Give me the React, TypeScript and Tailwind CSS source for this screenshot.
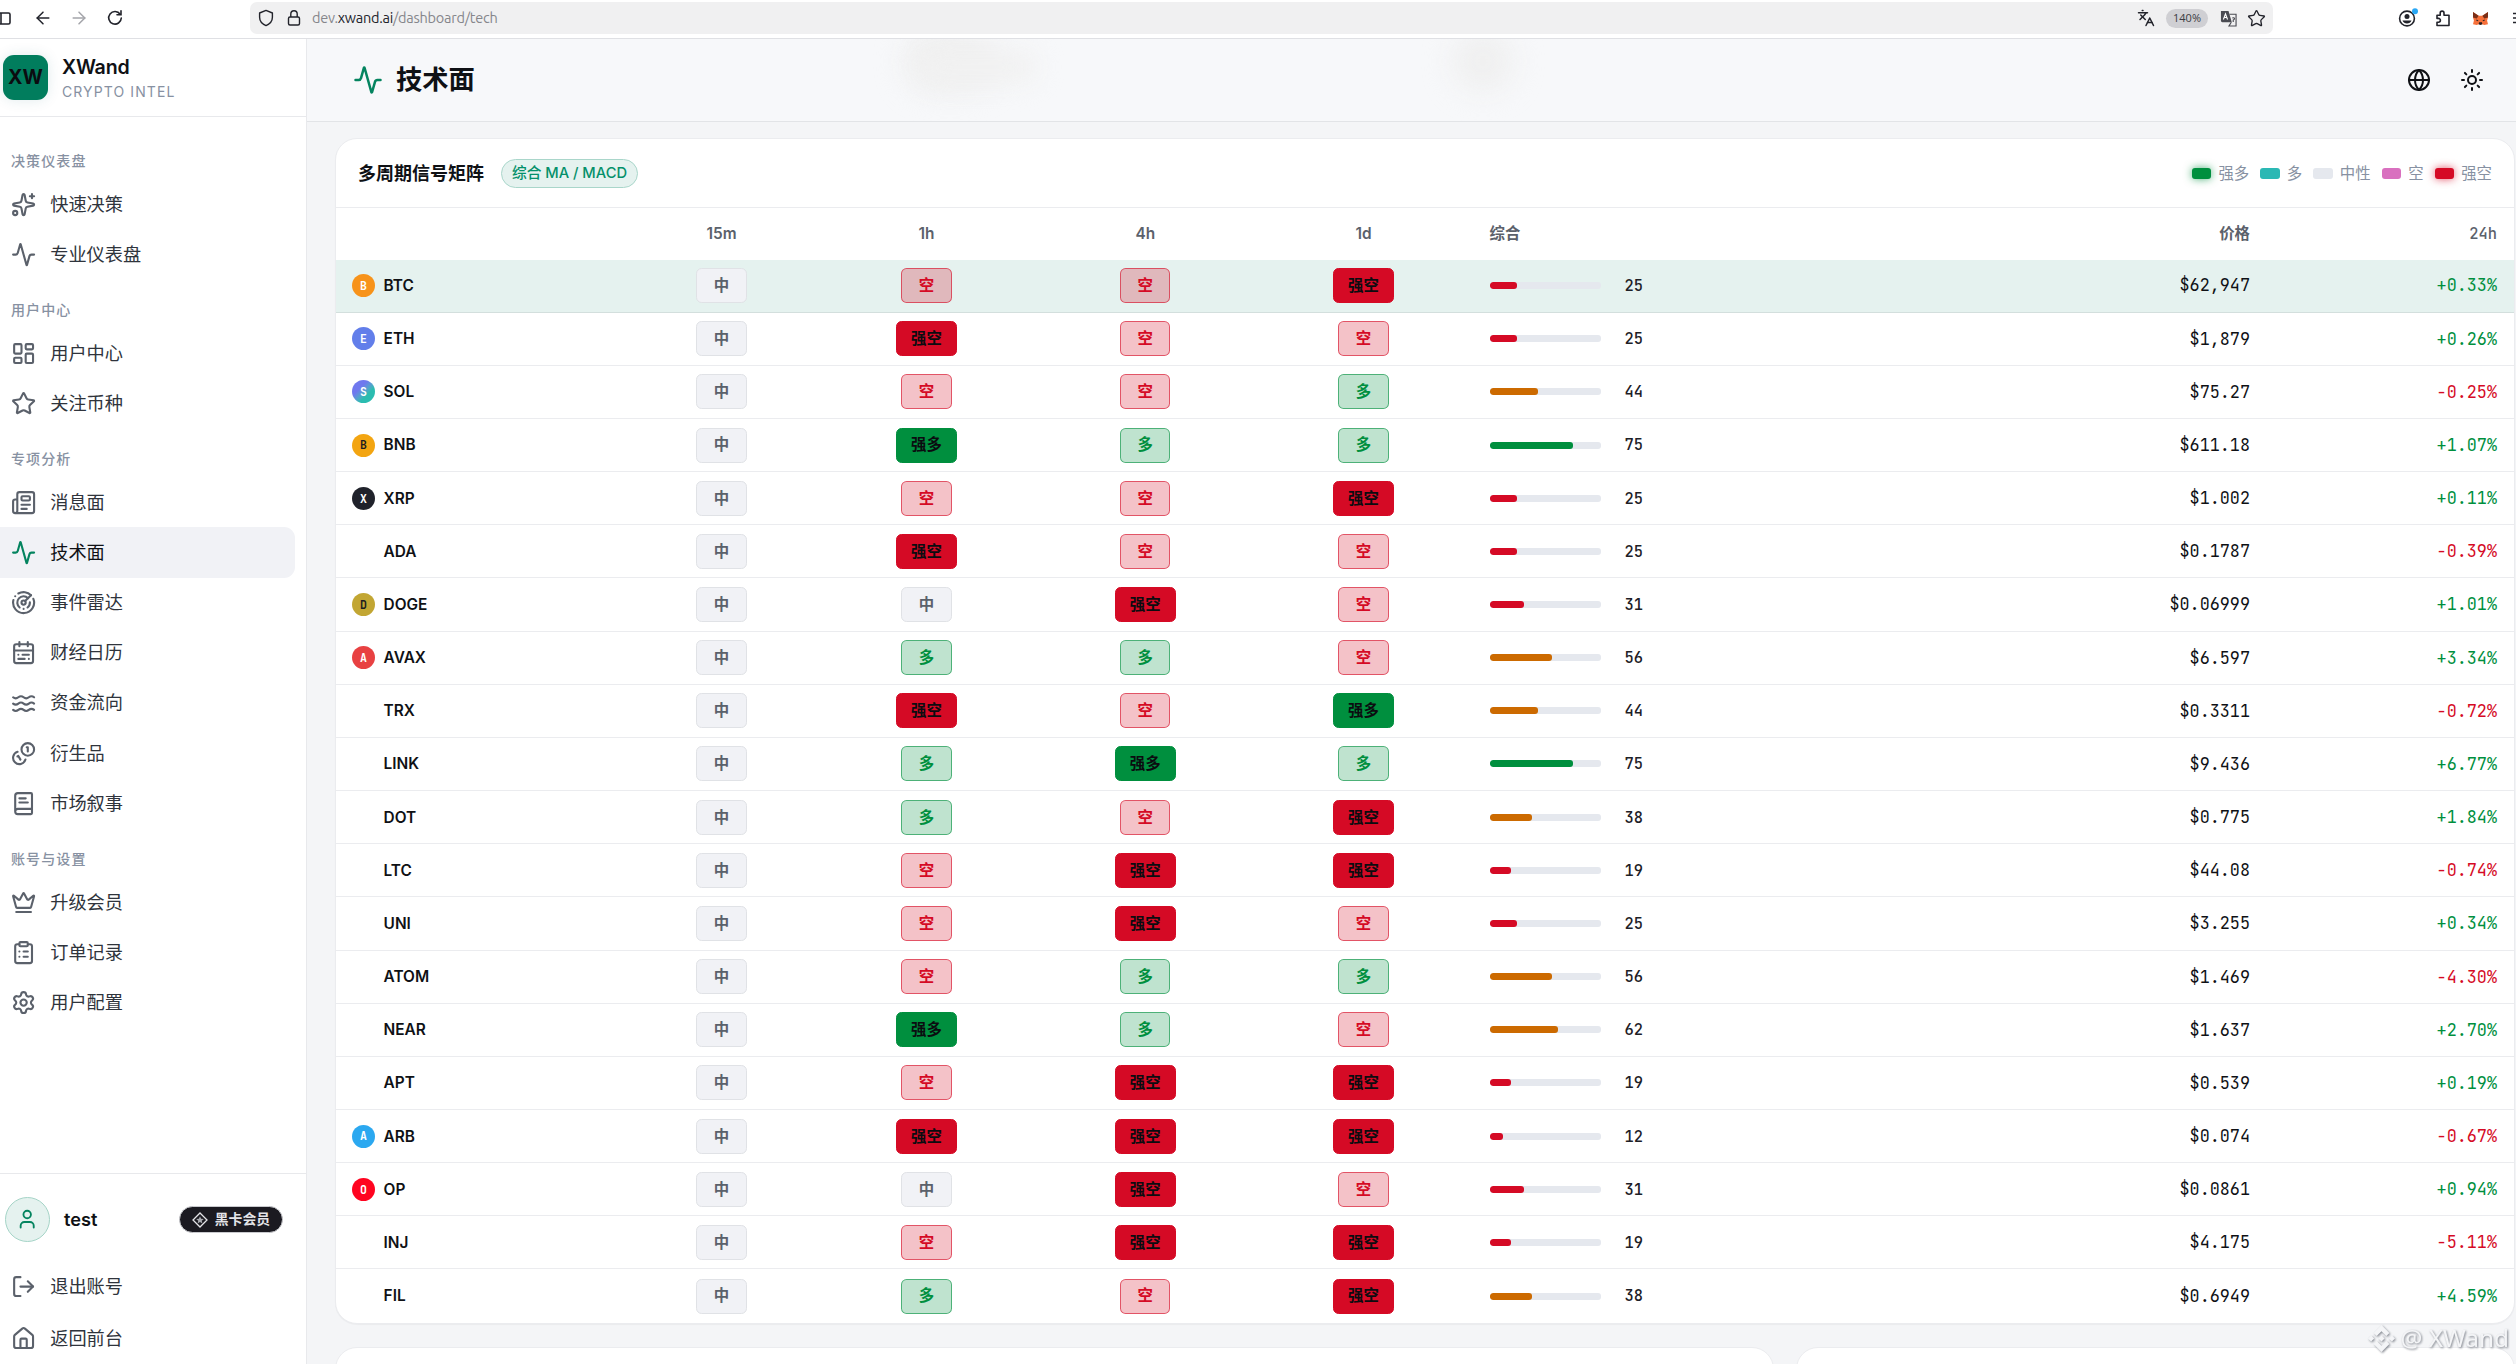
import {
  Activity,
  ArrowLeft,
  ArrowRight,
  BookText,
  CalendarRange,
  ClipboardList,
  Crown,
  Globe,
  House,
  Languages,
  LayoutDashboard,
  LogOut,
  Newspaper,
  Radar,
  Settings,
  Sparkles,
  Star,
  Sun,
  User,
  Waves,
} from "lucide-react";

const DerivativesIcon = ({ className }: { className?: string }) => (
  <svg
    viewBox="0 0 24 24"
    fill="none"
    stroke="currentColor"
    strokeWidth="2"
    strokeLinecap="round"
    strokeLinejoin="round"
    className={className}
  >
    <path d="M13.744 17.736a6 6 0 1 1-7.48-7.48" />
    <path d="M15 6h1v4" />
    <path d="m6.134 14.768.866-.5 2 3.464" />
    <circle cx="16" cy="8" r="6" />
  </svg>
);

const navGroups = [
  {
    title: "决策仪表盘",
    items: [
      { label: "快速决策", icon: Sparkles },
      { label: "专业仪表盘", icon: Activity },
    ],
  },
  {
    title: "用户中心",
    items: [
      { label: "用户中心", icon: LayoutDashboard },
      { label: "关注币种", icon: Star },
    ],
  },
  {
    title: "专项分析",
    items: [
      { label: "消息面", icon: Newspaper },
      { label: "技术面", icon: Activity, active: true },
      { label: "事件雷达", icon: Radar },
      { label: "财经日历", icon: CalendarRange },
      { label: "资金流向", icon: Waves },
      { label: "衍生品", icon: DerivativesIcon },
      { label: "市场叙事", icon: BookText },
    ],
  },
  {
    title: "账号与设置",
    items: [
      { label: "升级会员", icon: Crown },
      { label: "订单记录", icon: ClipboardList },
      { label: "用户配置", icon: Settings },
    ],
  },
];

type Signal = "中" | "多" | "空" | "强多" | "强空";

const signalStyles: Record<Signal, string> = {
  中: "min-w-[50.4px] border-[#e0e2e6] bg-[#f1f2f6] text-[#5b616b]",
  多: "min-w-[50.4px] border-[#008f3e]/60 bg-[#008f3e]/25 text-[#008f3e]",
  空: "min-w-[50.4px] border-[#d50a25]/60 bg-[#d50a25]/25 text-[#d50a25]",
  强多: "border-[#008f3e] bg-[#008f3e] text-[#0b0c10]",
  强空: "border-[#d50a25] bg-[#d50a25] text-[#0b0c10]",
};

const coinStyles: Record<string, string> = {
  BTC: "bg-[#f7931a] text-white",
  ETH: "bg-[#627eea] text-white",
  SOL: "bg-linear-135 from-[#6f78ee] from-35% to-[#2bbcb0] to-65% text-white",
  BNB: "bg-[#f3a511] text-[#1c1c20]",
  XRP: "bg-[#20222b] text-white",
  DOGE: "bg-[#c2a633] text-[#1c1c20]",
  AVAX: "bg-[#e84142] text-white",
  ARB: "bg-[#2ba8f0] text-white",
  OP: "bg-[#ff0420] text-white",
};

const rows: { coin: string; signals: Signal[]; score: number; price: string; change: string }[] = [
  { coin: "BTC", signals: ["中", "空", "空", "强空"], score: 25, price: "$62,947", change: "+0.33%" },
  { coin: "ETH", signals: ["中", "强空", "空", "空"], score: 25, price: "$1,879", change: "+0.26%" },
  { coin: "SOL", signals: ["中", "空", "空", "多"], score: 44, price: "$75.27", change: "-0.25%" },
  { coin: "BNB", signals: ["中", "强多", "多", "多"], score: 75, price: "$611.18", change: "+1.07%" },
  { coin: "XRP", signals: ["中", "空", "空", "强空"], score: 25, price: "$1.002", change: "+0.11%" },
  { coin: "ADA", signals: ["中", "强空", "空", "空"], score: 25, price: "$0.1787", change: "-0.39%" },
  { coin: "DOGE", signals: ["中", "中", "强空", "空"], score: 31, price: "$0.06999", change: "+1.01%" },
  { coin: "AVAX", signals: ["中", "多", "多", "空"], score: 56, price: "$6.597", change: "+3.34%" },
  { coin: "TRX", signals: ["中", "强空", "空", "强多"], score: 44, price: "$0.3311", change: "-0.72%" },
  { coin: "LINK", signals: ["中", "多", "强多", "多"], score: 75, price: "$9.436", change: "+6.77%" },
  { coin: "DOT", signals: ["中", "多", "空", "强空"], score: 38, price: "$0.775", change: "+1.84%" },
  { coin: "LTC", signals: ["中", "空", "强空", "强空"], score: 19, price: "$44.08", change: "-0.74%" },
  { coin: "UNI", signals: ["中", "空", "强空", "空"], score: 25, price: "$3.255", change: "+0.34%" },
  { coin: "ATOM", signals: ["中", "空", "多", "多"], score: 56, price: "$1.469", change: "-4.30%" },
  { coin: "NEAR", signals: ["中", "强多", "多", "空"], score: 62, price: "$1.637", change: "+2.70%" },
  { coin: "APT", signals: ["中", "空", "强空", "强空"], score: 19, price: "$0.539", change: "+0.19%" },
  { coin: "ARB", signals: ["中", "强空", "强空", "强空"], score: 12, price: "$0.074", change: "-0.67%" },
  { coin: "OP", signals: ["中", "中", "强空", "空"], score: 31, price: "$0.0861", change: "+0.94%" },
  { coin: "INJ", signals: ["中", "空", "强空", "强空"], score: 19, price: "$4.175", change: "-5.11%" },
  { coin: "FIL", signals: ["中", "多", "空", "强空"], score: 38, price: "$0.6949", change: "+4.59%" },
];

const legend = [
  { label: "强多", swatch: "bg-[#008f3e] shadow-[0_0_8px_rgba(0,143,62,0.7)]" },
  { label: "多", swatch: "bg-[#2bb8b4]" },
  { label: "中性", swatch: "bg-[#e5e8ee]" },
  { label: "空", swatch: "bg-[#d970bf]" },
  { label: "强空", swatch: "bg-[#d50a25] shadow-[0_0_8px_rgba(213,10,37,0.7)]" },
];

const gridCols = "grid grid-cols-[290px_191px_219px_218.5px_218px_1fr_300px_247px] items-center";
const mono = "font-['JetBrains_Mono','DejaVu_Sans_Mono','Noto_Sans_CJK_SC',monospace]";

const scoreColor = (score: number) => {
  if (score >= 70) return "bg-[#008f3e]";
  if (score >= 35) return "bg-[#cc6a00]";
  return "bg-[#d50a25]";
};

const BrowserBar = () => (
  <div className="flex h-[39px] shrink-0 items-center border-b border-[#dfe0e4] bg-white pb-[2px] text-[#22232b]">
    <div className="flex w-[250px] items-center">
      <svg viewBox="0 0 16 16" className="-ml-px size-4" fill="none" stroke="currentColor" strokeWidth="1.6">
        <rect x="-3" y="3" width="14" height="11" rx="1.5" />
        <path d="M2 3v11" />
      </svg>
      <ArrowLeft className="ml-[18px] size-5" strokeWidth={1.8} />
      <ArrowRight className="ml-4 size-5 text-[#a4a5aa]" strokeWidth={1.8} />
      <svg
        viewBox="0 0 20 20"
        className="ml-4 size-5"
        fill="none"
        stroke="currentColor"
        strokeWidth="1.6"
        strokeLinecap="round"
      >
        <path d="M15.2 6.2A6.3 6.3 0 1 0 16.3 10" />
        <path d="M16 2.8v4h-4" />
      </svg>
    </div>
    <div className="flex h-8 w-[2023px] items-center rounded-[7px] bg-[#f0f0f1] pr-[7px] pl-[7px]">
      <svg viewBox="0 0 18 18" className="size-[18px]" fill="none" stroke="currentColor" strokeWidth="1.4">
        <path d="M9 1.4 15.4 4v4.3c0 3.9-2.6 6.7-6.4 8.3C5.2 15 2.6 12.2 2.6 8.3V4Z" strokeLinejoin="round" />
      </svg>
      <svg viewBox="0 0 18 18" className="ml-[10px] size-[18px]" fill="none" stroke="currentColor" strokeWidth="1.4">
        <rect x="3.5" y="8" width="11" height="8" rx="1.5" />
        <path d="M5.8 8V5a3.2 3.2 0 0 1 6.4 0v3" />
      </svg>
      <span className="ml-[9px] font-['Ubuntu','Open_Sans',sans-serif] text-[14.5px] tracking-[-0.25px] text-[#85868b]">
        dev.<span className="text-[#22232b]">xwand.ai</span>/dashboard/tech
      </span>
      <Languages className="ml-auto size-[18px]" strokeWidth={2} />
      <span className="ml-[11px] flex h-[19px] w-[42px] items-center justify-center rounded-full bg-[#cfcfd3] font-['Open_Sans',sans-serif] text-[11px] text-[#3a3b42]">
        140%
      </span>
      <svg viewBox="0 0 18 18" className="ml-3 size-[17px]">
        <path d="M1 1h8l3.5 12H2.5A1.5 1.5 0 0 1 1 11.5Z" fill="#4a4b52" />
        <path d="M3.6 10 5.8 4l2.2 6M4.400 8h2.800" stroke="white" strokeWidth="1.2" fill="none" />
        <path d="M10 4.5h7v12.5H9.500L12 13M13 8.5c3-1 3 1.500 1 2.200v2" stroke="#4a4b52" strokeWidth="1.2" fill="none" />
      </svg>
      <Star className="ml-[10px] size-[19px]" strokeWidth={1.7} />
    </div>
    <div className="-mr-px ml-auto flex items-center">
      <svg viewBox="0 0 20 20" className="size-5">
        <circle cx="9" cy="10.5" r="7.4" fill="none" stroke="currentColor" strokeWidth="1.6" />
        <circle cx="9" cy="8.5" r="2.5" fill="currentColor" />
        <path d="M4.5 12.5h9c-.6 2-2.5 3-4.5 3s-3.9-1-4.500-3Z" fill="currentColor" />
        <circle cx="17" cy="3.3" r="3" fill="#2aa8f5" />
      </svg>
      <svg
        viewBox="0 0 18 18"
        className="ml-4 size-[18px]"
        fill="none"
        stroke="currentColor"
        strokeWidth="1.6"
        strokeLinejoin="round"
      >
        <path d="M3 6.2h3.200V4a1.900 1.900 0 0 1 3.800 0v2.200h5V16.500H3v-3.300h1.500a1.900 1.900 0 0 0 0-3.800H3Z" />
      </svg>
      <svg viewBox="0 0 18 16" className="ml-5 h-[15px] w-[17px]">
        <path d="M1 1l6 4h4l6-4v6l-1 3 1 4-4 1-2-1H7l-2 1-4-1 1-4-1-3Z" fill="#f6703a" />
        <path d="M1 1l6 4-2 3-4-1ZM17 1l-6 4 2 3 4-1Z" fill="#7b2f17" />
        <path d="M7 14l.5-2h3l.5 2-2 .8Z" fill="#2b2020" />
        <path d="M4.5 9.5l2 .8M13.5 9.5l-2 .8" stroke="#3a2a2a" strokeWidth="1.2" />
      </svg>
      <svg viewBox="0 0 4 12" className="ml-6 h-3 w-1" stroke="currentColor" strokeWidth="1.5">
        <path d="M0 1.5h4M0 6h4M0 10.5h4" />
      </svg>
    </div>
  </div>
);

const Sidebar = () => (
  <aside className="flex w-[307px] shrink-0 flex-col border-r border-[#e8e9ec] bg-white">
    <div className="flex h-[78px] shrink-0 items-center gap-[14px] border-b border-[#e8e9ec] pl-[3px]">
      <div className="flex size-[45px] items-center justify-center rounded-[11px] bg-[#017d5d] text-[19.6px] font-bold text-[#0b0c10] shadow-[0_0_14px_rgba(1,90,110,0.12)]">
        XW
      </div>
      <div className="flex flex-col pt-[3px]">
        <span className="text-[19.6px] leading-[25px] font-semibold tracking-[-0.2px]">XWand</span>
        <span className="text-[14px] leading-[23px] tracking-[1.1px] text-[#8791a2]">CRYPTO INTEL</span>
      </div>
    </div>

    <nav className="flex-1 pt-[14px]">
      {navGroups.map((group) => (
        <div key={group.title}>
          <div className="h-[48.5px] pt-[20px] pl-[11px] text-[14px] leading-5 font-medium tracking-[1.1px] text-[#8791a2]">
            {group.title}
          </div>
          {group.items.map(({ label, icon: Icon, active }) => (
            <div
              key={label}
              className={`mr-[11px] -ml-3 flex h-[50.2px] items-center gap-[14px] rounded-[11px] pl-[23px] text-[18.2px] ${
                active ? "bg-[#f1f2f6] text-[#0f1115]" : "text-[#2f343c]"
              }`}
            >
              <Icon className={`size-[25.2px] ${active ? "text-[#04845f]" : "text-[#5b616b]"}`} />
              <span>{label}</span>
            </div>
          ))}
        </div>
      ))}
    </nav>

    <div className="h-[191px] shrink-0 border-t border-[#e8e9ec] pt-[23px]">
      <div className="flex h-[45px] items-center pr-[23px] pl-[5px]">
        <div className="flex size-[45px] items-center justify-center rounded-full border border-[#a5d4c7] bg-[#e5f2ef]">
          <User className="size-[22.4px] text-[#04845f]" />
        </div>
        <span className="ml-[14px] text-[18.2px] font-semibold">test</span>
        <div className="ml-auto flex h-[27px] items-center gap-[7px] rounded-full border border-[#c9cace] bg-[#1b1a21] px-[12px] text-[13.8px] font-bold text-[#e4e4e8]">
          <svg viewBox="0 0 16 16" className="size-4">
            <path d="M8 1l7 7-7 7-7-7Z" fill="none" stroke="currentColor" strokeWidth="1.3" />
            <path
              d="M8 4.2l1.1 2.5 2.7.2-2 1.8.6 2.7L8 10l-2.4 1.4.6-2.7-2-1.8 2.7-.2Z"
              fill="#a9aab0"
            />
          </svg>
          黑卡会员
        </div>
      </div>
      <div className="flex flex-col gap-[2.4px] pt-[19px]">
        {[
          { label: "退出账号", icon: LogOut },
          { label: "返回前台", icon: House },
        ].map(({ label, icon: Icon }) => (
          <div key={label} className="flex h-[50.4px] items-center gap-[14px] pl-[11px] text-[18.2px] text-[#2f343c]">
            <Icon className="size-[25.2px] text-[#5b616b]" />
            <span>{label}</span>
          </div>
        ))}
      </div>
    </div>
  </aside>
);

const SignalBadge = ({ signal }: { signal: Signal }) => (
  <span
    className={`flex h-[35px] items-center justify-center rounded-[5.6px] border px-[14px] text-[15.4px] font-bold ${signalStyles[signal]}`}
  >
    {signal}
  </span>
);

const SignalMatrix = () => (
  <section className="overflow-hidden rounded-[22px] border border-[#ebecef] bg-white shadow-[0_1px_1px_rgba(0,0,0,0.04)]">
    <div className="flex h-[69px] items-center border-b border-[#ebecef] px-[22px] pt-px">
      <h2 className="text-[18px] font-bold">多周期信号矩阵</h2>
      <span className="ml-[17px] flex h-[29px] items-center rounded-full border border-[#a9d6ca] bg-[#e5f2ef] px-[10px] text-[14.7px] font-medium text-[#04906a]">
        综合 MA / MACD
      </span>
      <div className="ml-auto flex items-center gap-[11px] text-[15.4px] text-[#8791a2]">
        {legend.map((item) => (
          <div key={item.label} className="flex items-center gap-[7px]">
            <span className={`h-[11px] w-[19.6px] rounded-[3px] ${item.swatch}`} />
            {item.label}
          </div>
        ))}
      </div>
    </div>

    <div className={`h-[51.5px] text-[15.4px] font-semibold text-[#5b616b] ${gridCols}`}>
      <span />
      <span className="text-center">15m</span>
      <span className="text-center">1h</span>
      <span className="text-center">4h</span>
      <span className="text-center">1d</span>
      <span className="pl-[17px]">综合</span>
      <span className="pr-[17px] text-right">价格</span>
      <span className={`pr-[17px] text-right font-medium ${mono}`}>24h</span>
    </div>

    {rows.map((row) => (
      <div
        key={row.coin}
        className={`h-[53.17px] border-b last:border-b-0 ${gridCols} ${
          row.coin === "BTC" ? "border-[#d3dfdd] bg-[#e5f2ef]" : "border-[#ebecef]"
        }`}
      >
        <div className="flex items-center gap-[8.6px] pl-[16px]">
          {coinStyles[row.coin] ? (
            <span
              className={`flex size-[23px] items-center justify-center rounded-full text-[11.5px] font-semibold ${mono} ${coinStyles[row.coin]}`}
            >
              {row.coin[0]}
            </span>
          ) : (
            <span className="size-[23px]" />
          )}
          <span className="text-[15.4px] font-semibold text-[#0f1115]">{row.coin}</span>
        </div>
        {row.signals.map((signal, i) => (
          <div key={i} className="flex justify-center">
            <SignalBadge signal={signal} />
          </div>
        ))}
        <div className="flex items-center gap-[24px] pl-[17px]">
          <div className="h-[7px] w-[111px] overflow-hidden rounded-[3px] bg-[#e5e8ee]">
            <div className={`h-full rounded-[3px] ${scoreColor(row.score)}`} style={{ width: `${row.score}%` }} />
          </div>
          <span className={`text-[15.4px] font-medium text-[#1d2026] ${mono}`}>{row.score}</span>
        </div>
        <span className={`pt-px pr-[17px] text-right text-[16.8px] text-[#0f1115] ${mono}`}>{row.price}</span>
        <span
          className={`pt-px pr-[17px] text-right text-[16.8px] ${mono} ${
            row.change.startsWith("+") ? "text-[#008f3e]" : "text-[#d50a25]"
          }`}
        >
          {row.change}
        </span>
      </div>
    ))}
  </section>
);

const Watermark = () => (
  <div className="absolute right-[7px] bottom-[8px] flex items-center gap-[5px] font-['Noto_Sans',sans-serif] text-[24.4px] leading-9 text-[#f4f5f7] [filter:drop-shadow(1px_1px_1px_rgba(90,95,105,0.75))]">
    <svg viewBox="0 0 28 28" className="size-[27px]" fill="currentColor">
      <path d="M14 0l8.200 8.200-3.200 3.200-5-5-5 5-3.200-3.200Z" />
      <path d="M14 28l8.200-8.200-3.200-3.200-5 5-5-5-3.200 3.200Z" />
      <path d="M3.200 10.800l3.200 3.200-3.200 3.200L0 14ZM24.800 10.800l3.200 3.200-3.200 3.200-3.200-3.200ZM14 10.800l3.200 3.200-3.200 3.200-3.200-3.200Z" />
    </svg>
    <span>@ XWand</span>
  </div>
);

export default function App() {
  return (
    <div className="relative flex h-[1364px] w-[2516px] flex-col overflow-hidden bg-[#f4f5f7] font-['Inter','Noto_Sans_CJK_SC',sans-serif] text-[#0f1115]">
      <BrowserBar />
      <div className="flex min-h-0 flex-1">
        <Sidebar />
        <main className="flex min-w-0 flex-1 flex-col">
          <header className="relative flex h-[83px] shrink-0 items-center overflow-hidden border-b border-[#e2e4e7] bg-[#f7f8fa] pr-[32px] pl-[46px]">
            <div className="absolute -top-2 left-[598px] h-[60px] w-[90px] rounded-full bg-[#efefef] blur-[14px]" />
            <div className="absolute top-3 left-[610px] h-[32px] w-[120px] rounded-full bg-[#f1f1f1] blur-[12px]" />
            <div className="absolute -top-2 left-[1146px] h-[60px] w-[60px] rounded-full bg-[#efefef] blur-[14px]" />
            <Activity className="size-[30px] text-[#04845f]" />
            <h1 className="ml-[13px] text-[26.3px] font-bold">技术面</h1>
            <div className="ml-auto flex items-center gap-[29px]">
              <Globe className="size-6" />
              <Sun className="size-6" />
            </div>
          </header>
          <div className="flex flex-col gap-[23px] pt-[16px] pr-px pl-[28px]">
            <SignalMatrix />
            <div className="grid grid-cols-[2fr_1fr] gap-[22px]">
              <div className="h-20 rounded-[22px] border border-[#ebecef] bg-white" />
              <div className="h-20 rounded-[22px] border border-[#ebecef] bg-white" />
            </div>
          </div>
        </main>
      </div>
      <Watermark />
    </div>
  );
}
